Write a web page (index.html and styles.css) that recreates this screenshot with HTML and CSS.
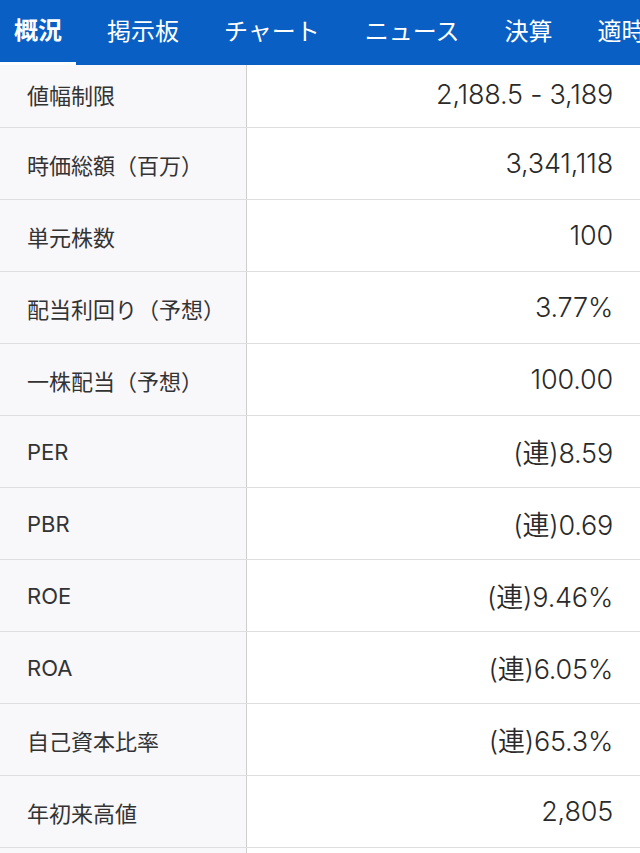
FILE: index.html
```html
<!DOCTYPE html>
<html lang="ja">
<head>
<meta charset="utf-8">
<link rel="stylesheet" href="styles.css">
</head>
<body>
<nav class="tabs">
  <div class="tab active">概況</div>
  <div class="tab">掲示板</div>
  <div class="tab">チャート</div>
  <div class="tab">ニュース</div>
  <div class="tab">決算</div>
  <div class="tab">適時開示</div>
</nav>
<div class="table">
  <div class="row first"><div class="label">値幅制限</div><div class="value">2,188.5 - 3,189</div></div>
  <div class="row"><div class="label">時価総額（百万）</div><div class="value">3,341,118</div></div>
  <div class="row"><div class="label">単元株数</div><div class="value">100</div></div>
  <div class="row"><div class="label">配当利回り（予想）</div><div class="value">3.77%</div></div>
  <div class="row"><div class="label">一株配当（予想）</div><div class="value">100.00</div></div>
  <div class="row"><div class="label">PER</div><div class="value">(連)8.59</div></div>
  <div class="row"><div class="label">PBR</div><div class="value">(連)0.69</div></div>
  <div class="row"><div class="label">ROE</div><div class="value">(連)9.46%</div></div>
  <div class="row"><div class="label">ROA</div><div class="value">(連)6.05%</div></div>
  <div class="row"><div class="label">自己資本比率</div><div class="value">(連)65.3%</div></div>
  <div class="row"><div class="label">年初来高値</div><div class="value">2,805</div></div>
  <div class="row"><div class="label"></div><div class="value"></div></div>
</div>
</body>
</html>
```
FILE: styles.css
```css
html, body {
  margin: 0;
  padding: 0;
  background: #fff;
  overflow: hidden;
}
body {
  width: 640px;
  height: 853px;
  font-family: Inter, "Noto Sans CJK JP", sans-serif;
  color: #2a2a2a;
}
.tabs {
  display: flex;
  gap: 17px;
  height: 65px;
  background: #0a5fc5;
  white-space: nowrap;
  overflow: hidden;
}
.tab {
  flex: none;
  padding: 0 14px;
  height: 65px;
  line-height: 63px;
  font-size: 24px;
  color: #fff;
  box-sizing: border-box;
}
.tab.active {
  font-weight: bold;
  border-bottom: 3px solid #fff;
  line-height: 62px;
}
.table {
  display: flex;
  flex-direction: column;
}
.row {
  display: flex;
  height: 72px;
  border-bottom: 1px solid #dedede;
  box-sizing: border-box;
}
.row.first {
  height: 63px;
}
.row.first .label,
.row.first .value {
  padding-bottom: 4px;
}
.label {
  width: 247px;
  flex: none;
  box-sizing: border-box;
  padding-left: 27px;
  background: #f8f7fa;
  border-right: 1px solid #cfcfcf;
  display: flex;
  align-items: center;
  font-size: 22px;
  color: #333;
}
.value {
  flex: 1;
  box-sizing: border-box;
  display: flex;
  align-items: center;
  justify-content: flex-end;
  padding-right: 27px;
  font-size: 27px;
  font-weight: 350;
  letter-spacing: -0.2px;
  color: #2a2a2a;
}
```
